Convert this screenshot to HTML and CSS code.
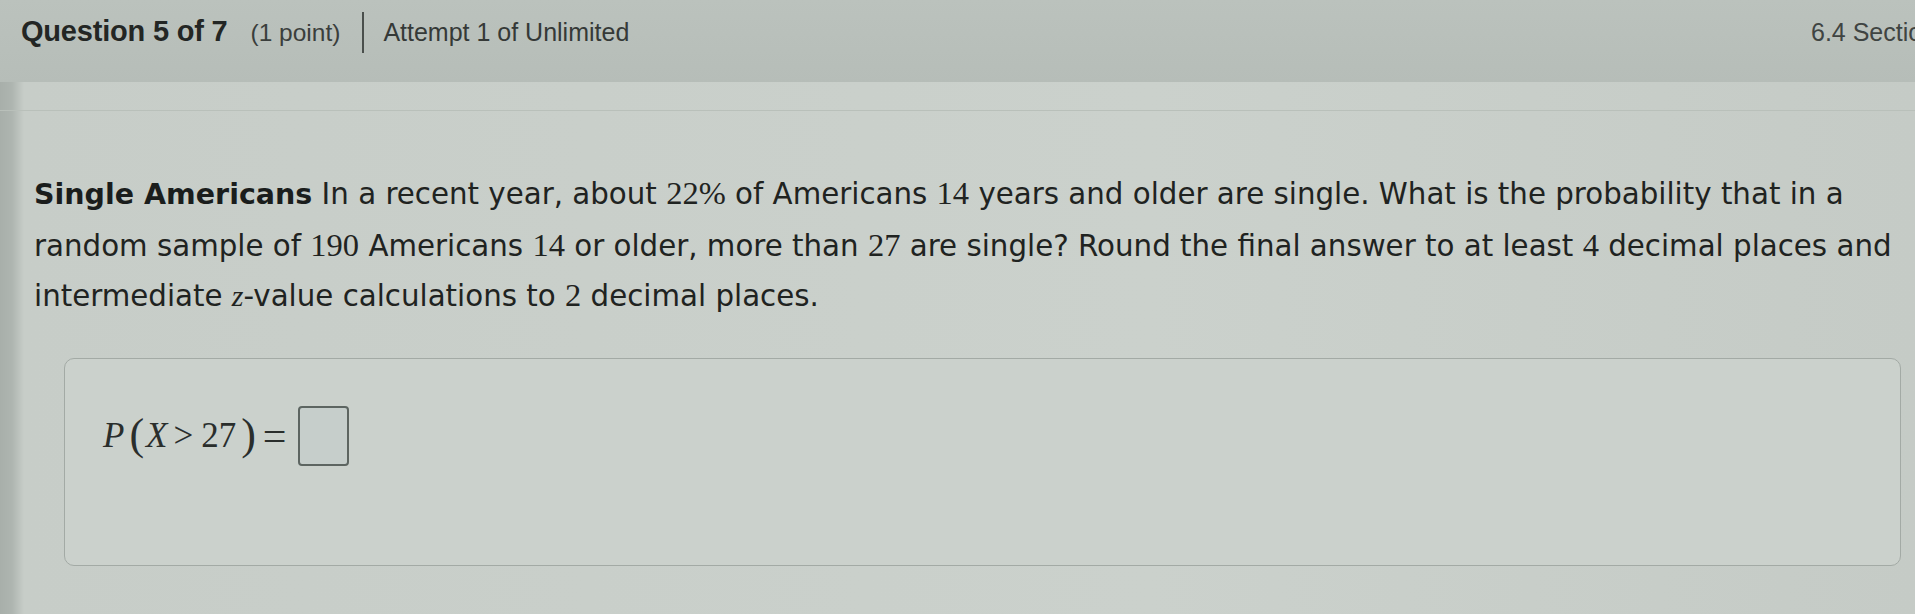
FILE: index.html
```html
<!DOCTYPE html>
<html lang="en">
<head>
<meta charset="utf-8">
<title>Question 5 of 7</title>
<link rel="stylesheet" href="styles.css">
</head>
<body>
<header class="topbar">
  <span class="q-title">Question 5 of 7</span>
  <span class="q-points">(1 point)</span>
  <span class="q-sep"></span>
  <span class="q-attempt">Attempt 1 of Unlimited</span>
  <span class="q-section">6.4 Section Exercises</span>
</header>
<main class="content">
  <div class="question">
    <p class="prompt">
      <b>Single Americans</b> In a recent year, about <span class="num">22%</span> of Americans <span class="num">14</span> years and older are single. What is the probability that in a<br>
      random sample of <span class="num">190</span> Americans <span class="num">14</span> or older, more than <span class="num">27</span> are single? Round the final answer to at least <span class="num">4</span> decimal places and<br>
      intermediate <span class="var">z</span>-value calculations to <span class="num">2</span> decimal places.
    </p>
    <div class="answer">
      <div class="math">
        <span class="mi">P</span><span class="paren">(</span><span class="mi mi-x">X</span><span class="mo">&gt;</span><span class="mn">27</span><span class="paren">)</span><span class="mo eq">=</span><span class="blank"></span>
      </div>
    </div>
  </div>
</main>
</body>
</html>
```

FILE: styles.css
```css
html, body {
  margin: 0;
  padding: 0;
  width: 1915px;
  height: 614px;
  overflow: hidden;
}

body {
  background: #c9cfca;
  color: #222624;
}

.topbar {
  height: 82px;
  display: flex;
  align-items: baseline;
  background: linear-gradient(180deg, #bbc2bd 0%, #b6bdb8 100%);
  font-family: "Liberation Sans", Arial, sans-serif;
  color: #2b2f2d;
  white-space: nowrap;
  padding: 15px 0 0 21px;
  box-sizing: border-box;
}

.q-title {
  font-size: 29px;
  font-weight: bold;
  color: #232624;
  letter-spacing: -0.2px;
}

.q-points {
  font-size: 24.5px;
  margin-left: 23px;
  color: #3a3e3c;
}

.q-sep {
  align-self: flex-start;
  width: 2px;
  height: 41px;
  background: #4a4f4c;
  margin-left: 22px;
  margin-top: -3px;
}

.q-attempt {
  font-size: 25px;
  margin-left: 19px;
  color: #353937;
}

.q-section {
  margin-left: auto;
  width: 104px;
  min-width: 0;
  flex: 0 0 104px;
  overflow: visible;
  font-size: 25px;
  color: #3f4442;
}

.content {
  padding-top: 28px;
  background: linear-gradient(90deg, #a8afaa 0px, #aeb5b0 12px, #c7cdc8 24px, #cbd1cc 60%, #c5cbc6 100%);
  height: 532px;
  box-sizing: border-box;
}

.question {
  border-top: 1px solid #b9c0ba;
  padding-top: 58px;
}

.prompt {
  margin: 0;
  padding-left: 34px;
  font-family: "DejaVu Sans", Verdana, sans-serif;
  font-size: 29.3px;
  line-height: 50.5px;
  color: #1f2321;
  white-space: nowrap;
}

.prompt b {
  font-weight: bold;
  font-size: 28.5px;
  color: #1a1d1c;
}

.num {
  font-family: "Liberation Serif", "Times New Roman", serif;
  font-size: 32.5px;
  line-height: 1;
}

.var {
  font-family: "Liberation Serif", "Times New Roman", serif;
  font-style: italic;
  font-size: 30px;
  line-height: 1;
}

.answer {
  margin: 36px 14px 0 64px;
  height: 208px;
  border: 1px solid #a3aaa5;
  border-radius: 10px;
  background: #cbd1cc;
  box-sizing: border-box;
  padding: 47px 0 0 38px;
}

.math {
  display: flex;
  align-items: center;
  font-family: "Liberation Serif", "Times New Roman", serif;
  font-size: 35px;
  color: #2a2e2c;
  height: 60px;
}

.mi {
  font-style: italic;
}

.mi-x {
  margin-left: 1px;
}

.paren {
  font-size: 44px;
  line-height: 1;
  margin: 0 1px 0 5px;
  transform: translateY(-1px);
}

.mo {
  margin: 0 6px 0 6px;
}

.mn {
  margin-left: 2px;
}

.eq {
  font-size: 42px;
  margin: 0 11px 0 6px;
}

.blank {
  width: 47px;
  height: 56px;
  border: 2px solid #5d6561;
  border-radius: 4px;
  background: #c6cecb;
}
```
